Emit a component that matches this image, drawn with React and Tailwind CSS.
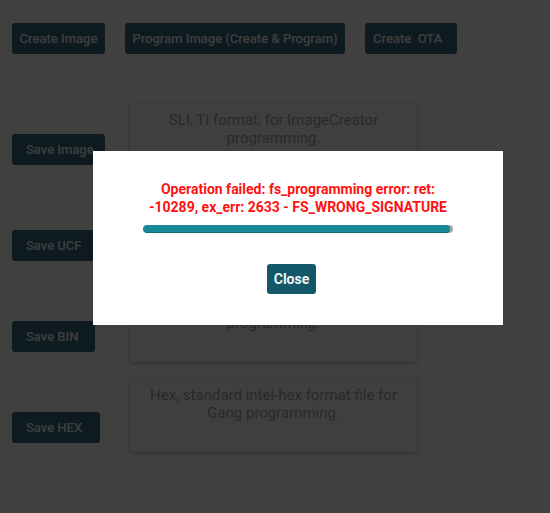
import React from "react";

const font = { fontFamily: "Roboto, 'Liberation Sans', sans-serif" };

const rows = [
  { label: "Save Image", w: "w-[93px]", h: "h-[77px]", pt: "pt-[31px]", text: "SLI, TI format, for ImageCreator programming." },
  { label: "Save UCF", w: "w-[88px]", h: "h-[76px]", pt: "pt-[34px]", text: "UCF, Uniflash format, for Uniflash programming." },
  { label: "Save BIN", w: "w-[83px]", h: "h-[74px]", pt: "pt-[33px]", text: "BIN, binary format file for Gang programming." },
  { label: "Save HEX", w: "w-[88px]", h: "h-[74px]", pt: "pt-[34px]", text: "Hex, standard intel-hex format file for Gang programming." },
];

const App = () => {
  return (
    <div className="relative w-[550px] h-[513px] bg-white overflow-hidden" style={font}>
      {/* page under the dialog */}
      <div className="flex gap-5 pl-3 pt-[23px]">
        <button className="h-[31px] w-[93px] px-[7px] rounded-[3px] bg-[#346c80] text-[13px] font-medium text-[#f4f4f4]">
          Create Image
        </button>
        <button className="h-[31px] w-[220px] px-[7px] rounded-[3px] bg-[#346c80] text-[13px] font-medium text-[#f4f4f4]">
          Program Image (Create &amp; Program)
        </button>
        <button className="h-[31px] w-[92px] pl-[8px] text-left rounded-[3px] bg-[#346c80] text-[13px] font-medium text-[#f4f4f4] whitespace-pre">
          Create  OTA
        </button>
      </div>

      <div className="flex flex-col gap-4 pl-3 mt-[49px]">
        {rows.map((r) => (
          <div key={r.label} className="flex">
            <div className={`w-[118px] ${r.pt}`}>
              <button
                className={`h-[31px] ${r.w} pl-[14px] text-left rounded-[3px] bg-[#346c80] text-[13px] font-medium text-[#f4f4f4]`}
              >
                {r.label}
              </button>
            </div>
            <div
              className={`w-[287px] ${r.h} rounded-[3px] bg-[#fcfcfc] shadow-[0_1px_4px_rgba(0,0,0,0.3)] px-4 pt-2 text-center text-[15px] leading-[18px] text-[#a4a4a4]`}
            >
              {r.text}
            </div>
          </div>
        ))}
      </div>

      {/* backdrop + dialog */}
      <div className="absolute inset-0 bg-black/75" />
      <div className="absolute left-[93px] top-[151px] w-[410px] bg-white px-[50px] pt-[29px] pb-[31px] flex flex-col items-center">
        <p className="text-center text-[14px] leading-[18px] font-bold text-[#ff1111]">
          Operation failed: fs_programming error: ret:
          <br />
          -10289, ex_err: 2633 - FS_WRONG_SIGNATURE
        </p>
        <div className="mt-[9px] w-full h-[8px] rounded-full bg-[#a8a8a8] overflow-hidden">
          <div className="h-full w-[99%] rounded-full bg-[#17899a] border-b border-[#0f6d7a]" />
        </div>
        <button className="mt-[31px] mr-[13px] h-[30px] w-[49px] rounded-[3px] bg-[#135868] text-[14px] font-bold text-[#eef4f6]">
          Close
        </button>
      </div>
    </div>
  );
};

export default App;
